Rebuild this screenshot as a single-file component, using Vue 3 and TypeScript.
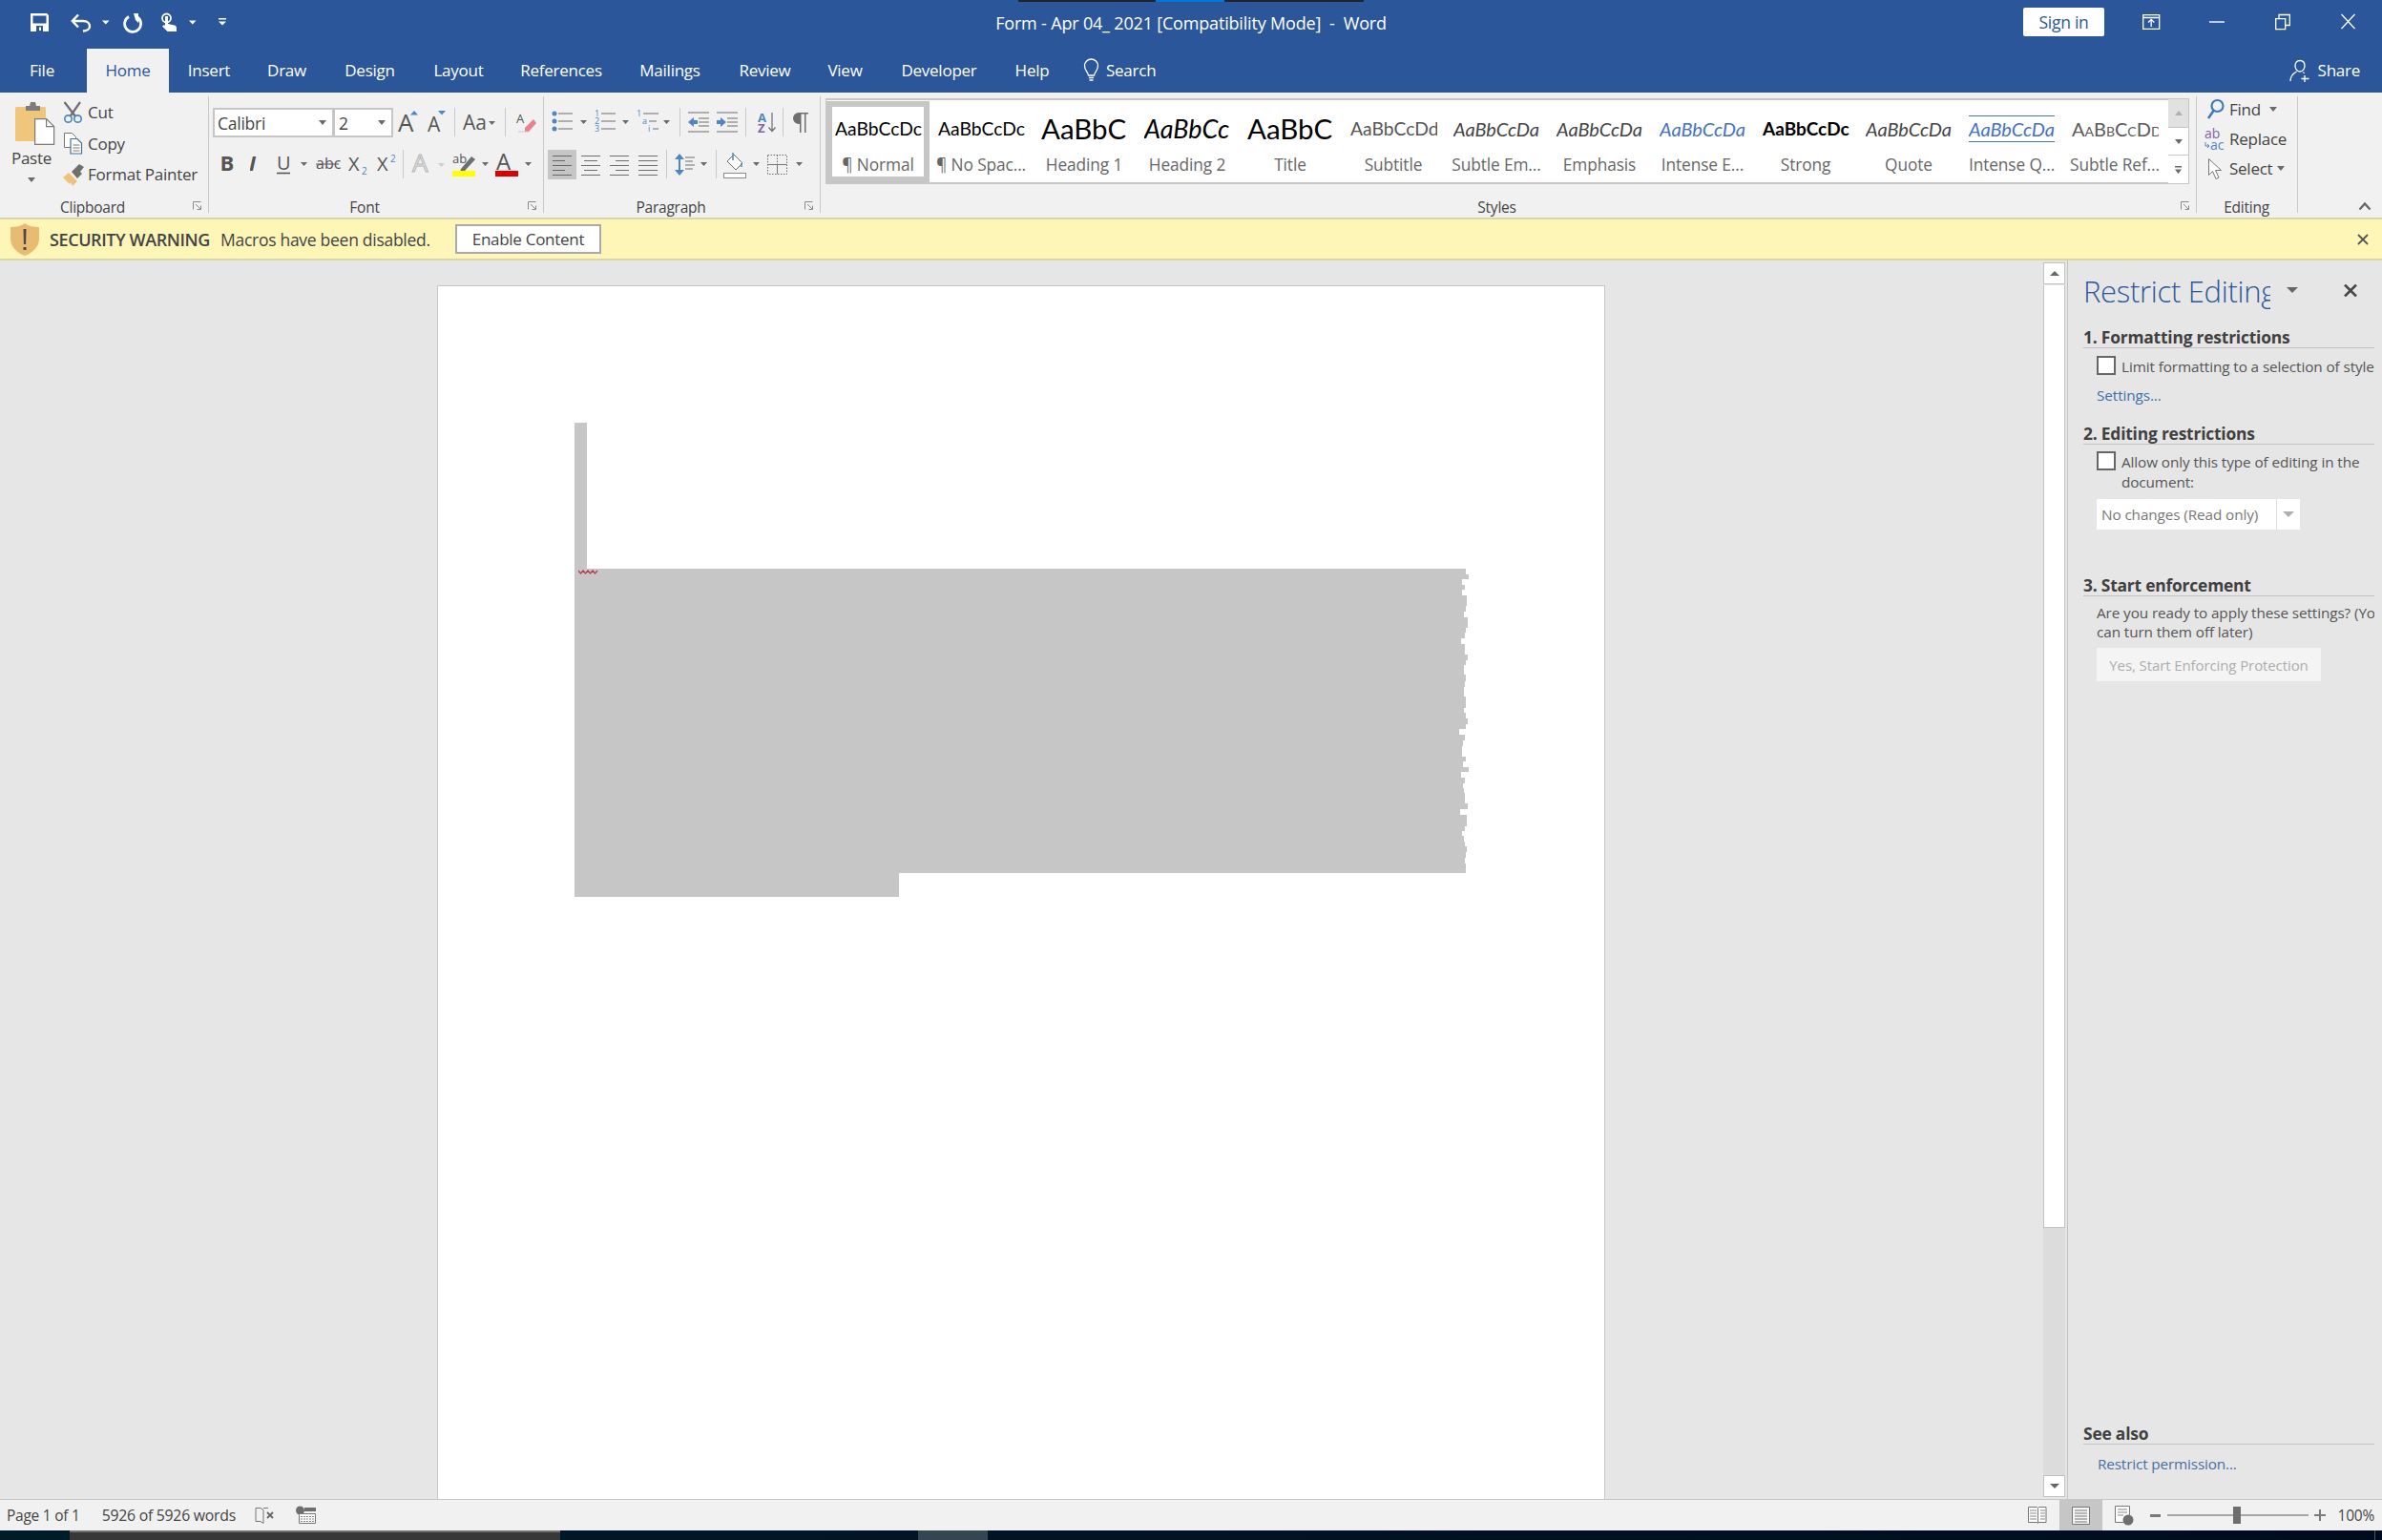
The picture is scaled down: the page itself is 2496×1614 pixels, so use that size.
<script setup lang="ts">
interface StyleItem { label: string; cls: string; text: string; selected?: boolean }
const tabs: string[] = ['File','Home','Insert','Draw','Design','Layout','References','Mailings','Review','View','Developer','Help']
const styles: StyleItem[] = [
  { label:'¶ Normal', cls:'s-normal', text:'AaBbCcDc', selected:true },
  { label:'¶ No Spac...', cls:'s-normal', text:'AaBbCcDc' },
  { label:'Heading 1', cls:'s-h1', text:'AaBbC' },
  { label:'Heading 2', cls:'s-h2', text:'AaBbCc' },
  { label:'Title', cls:'s-h1', text:'AaBbC' },
  { label:'Subtitle', cls:'s-sub', text:'AaBbCcDd' },
  { label:'Subtle Em...', cls:'s-em', text:'AaBbCcDa' },
  { label:'Emphasis', cls:'s-em', text:'AaBbCcDa' },
  { label:'Intense E...', cls:'s-ie', text:'AaBbCcDa' },
  { label:'Strong', cls:'s-strong', text:'AaBbCcDc' },
  { label:'Quote', cls:'s-em', text:'AaBbCcDa' },
  { label:'Intense Q...', cls:'s-iq', text:'AaBbCcDa' },
  { label:'Subtle Ref...', cls:'s-sr', text:'AaBbCcDd' },
]
// selection highlight: each row is one line fragment [y-end, right edge], measured in a 3x crop
const edges: [number, number][] = [[96,408],[110,417],[128,396],[145,405],[162,396],[195,411],[212,408],[230,402],[265,414],[280,408],[296,405],[315,393],[348,405],[365,414],[382,408],[412,402],[432,408],[450,405],[480,402],[515,408],[532,402],[550,408],[568,414],[582,408],[600,387],[618,405],[636,399],[670,396],[685,408],[702,399],[716,417],[735,393],[752,405],[768,399],[785,402],[818,405],[836,414],[852,390],[888,411],[904,405],[920,396],[936,402],[952,405],[970,411],[988,408],[1005,405],[1037,408]]
const rows = edges.map(([end, edge], i) => ({
  h: (end - (i ? edges[i - 1][0] : 78)) / 3,
  w: edge / 3 + 798,
}))
</script>

<template>
  <div class="app">
    <header class="titlebar">
      <div class="stripe"><i class="st-d"></i><i class="st-b"></i><i class="st-d2"></i></div>
      <div class="qat">
        <svg width="42" height="48"><path fill="#fff" fill-rule="evenodd" d="M0 14h17l2 2v17H0zM2.500 16.500v8h14v-8zM6 27v6h7v-6z"/><rect x="9" y="28.500" width="2" height="3.500" fill="#fff"/></svg>
        <svg width="55" height="48"><path fill="none" stroke="#fff" stroke-width="2.400" d="M8 15.500 1.800 22 8 28.500M2 22h11c5 0 7 3 7 5.500 0 3-3 5-7 5"/><path fill="#fff" d="M33 21.500h7.500l-3.700 4z"/></svg>
        <svg width="40" height="48"><path fill="none" stroke="#fff" stroke-width="2.800" d="M6 17.500a8.500 8.500 0 1 0 9 .5"/><path fill="#fff" d="M11 14l5 0 0 10-3-3z"/></svg>
        <svg width="60" height="48"><circle cx="5.500" cy="19" r="4.500" fill="none" stroke="#fff" stroke-width="1.800"/><path fill="#fff" d="M4 17h3v8l7 1.500c1.500.5 2 1.500 2 3V33H6.500L1 27.500 3 26l1 1z"/><path fill="#fff" d="M29 21.500h7.500l-3.700 4z"/></svg>
        <svg width="10" height="48"><path fill="#fff" d="M0 19h8v1.600H0zM0 22.500h8l-4 4z"/></svg>
      </div>
      <div class="doc-title">Form - Apr 04_ 2021 [Compatibility Mode]&nbsp; -&nbsp; Word</div>
      <div class="wc">
        <button class="signin">Sign in</button>
        <svg width="70" height="48"><path fill="none" stroke="#fff" stroke-width="1.300" d="M.7 15.700h17v14.600H.7zM.7 18.500h17M9.200 28v-7.500M6 23.500l3.200-3.200 3.200 3.200"/></svg>
        <svg width="69" height="48"><path stroke="#fff" stroke-width="1.400" d="M0 23h16"/></svg>
        <svg width="69" height="48"><path fill="none" stroke="#fff" stroke-width="1.300" d="M.7 19.700h10v11H.7zM4 19.500v-4h11.300v11H11"/></svg>
        <svg width="43" height="48"><path stroke="#fff" stroke-width="1.300" d="M.5 15l14 15M14.500 15l-14 15"/></svg>
      </div>
    </header>

    <nav class="tabs">
      <span v-for="t in tabs" :key="t" class="tab" :class="{ active: t === 'Home', file: t === 'File' }">{{ t }}</span>
      <span class="search">
        <svg width="18" height="26"><path fill="none" stroke="#fff" stroke-width="1.300" d="M5.500 18c0-3-4-5-4-10a7 7 0 0 1 14 0c0 5-4 7-4 10zM6 20.500h5M6.500 23h4"/></svg>
        Search
      </span>
      <span class="share">
        <svg width="22" height="26"><path fill="none" stroke="#fff" stroke-width="1.300" d="M11 2.500c3.500 0 5 2.500 5 5.500s-2 6-5 6-5-3-5-6 1.500-5.500 5-5.500zM1 24c0-5 3-8 6.500-10M14.500 14.500l1 1.500M16 18v7M12.500 21.500h8"/></svg>
        Share
      </span>
    </nav>

    <section class="ribbon">
      <!-- Clipboard -->
      <div class="group g-clip">
        <div class="clip-body">
          <div class="paste">
            <svg width="66" height="52"><rect x="16" y="11" width="32" height="36" rx="1.500" fill="#f0c67c"/><path fill="#7d7d7d" d="M27 10h4l1-4h5l1 4h4v5H27z"/><path fill="#fff" stroke="#7a7a7a" stroke-width="1.200" d="M36.600 23.600h12l8 8v18.800h-20z"/><path fill="none" stroke="#7a7a7a" stroke-width="1.200" d="M48.600 23.600v8h8"/></svg>
            <span class="paste-label">Paste</span>
            <i class="dd"></i>
          </div>
          <div class="clip-row">
            <svg width="26" height="24"><path stroke="#6f6f6f" stroke-width="2.200" d="M1.500 1 13 16M18 1 7.500 16"/><circle cx="5.500" cy="18.500" r="3.700" fill="none" stroke="#4f86c2" stroke-width="1.700"/><circle cx="15.500" cy="18.500" r="3.700" fill="none" stroke="#4f86c2" stroke-width="1.700"/></svg>
            Cut
          </div>
          <div class="clip-row">
            <svg width="26" height="24"><path fill="#fff" stroke="#777" d="M1.500 1.500h8l4 4v11h-12z"/><path fill="#fff" stroke="#4d6f94" stroke-width="1.200" d="M8 7.500h7l4.500 4.500v11H8z"/><path stroke="#777" d="M10.500 14h7M10.500 17h7M10.500 20h7"/></svg>
            Copy
          </div>
          <div class="clip-row">
            <svg width="26" height="24"><path fill="#efc27b" d="M0 15l6-5 9 9-5 5-2-4-1 2z"/><path fill="#6f6f6f" d="M9 9l8-8 5 3-4 5 2 2-5 5z"/></svg>
            Format Painter
          </div>
        </div>
        <div class="glabel lab-pad">Clipboard</div>
        <svg class="launch" width="10" height="10"><path fill="none" stroke="#8a8a8a" d="M.5 8.500v-8h8M3 3l5 5M8.500 4.500v4h-4"/></svg>
      </div>

      <!-- Font -->
      <div class="group g-font">
        <div class="tool-body">
          <div class="row r1 font-r1">
            <div class="combo c-font"><span>Calibri</span><i class="dd"></i></div>
            <div class="combo c-size"><span>2</span><i class="dd"></i></div>
            <svg width="36" height="31"><text x="5" y="25" class="ic-t" font-size="26">A</text><path fill="#4f86c2" d="M18 7.500l4-4.500 4 4.500z"/></svg>
            <svg width="28" height="31"><text x="0" y="25" class="ic-t" font-size="21">A</text><path fill="#4f86c2" d="M11 3h8l-4 4.500z"/></svg>
            <i class="sep"></i>
            <svg width="52" height="31"><text x="8" y="23" class="ic-t" font-size="21">Aa</text><path fill="#6a6a6a" d="M35 14h7l-3.500 4z"/></svg>
            <i class="sep"></i>
            <svg width="36" height="31"><text x="11" y="16" class="ic-t" font-size="13">A</text><path fill="#e8808f" d="M20 21l9-9 3 4-8 9-4 0z"/><path fill="none" stroke="#c8c8c8" d="M13 25h12"/></svg>
          </div>
          <div class="row r2 font-r2">
            <svg width="31" height="30"><text x="-.5" y="22" class="ic-t b" font-size="22">B</text></svg>
            <svg width="28" height="30"><text x="-1" y="22" class="ic-t i b" font-size="22">I</text></svg>
            <svg width="41" height="30"><text x="0" y="21" class="ic-t" font-size="20">U</text><path stroke="#555" stroke-width="1.600" d="M0 24.500h14"/><path fill="#6a6a6a" d="M25 13h7l-3.500 4z"/></svg>
            <svg width="34" height="30"><text x="0" y="20" class="ic-t" font-size="16" letter-spacing="-.5">abc</text><path stroke="#555" d="M0 15h24"/></svg>
            <svg width="30" height="30"><text x="0" y="22" class="ic-t" font-size="20">X</text><text x="14" y="26" class="ic-b" font-size="10">2</text></svg>
            <svg width="27" height="30"><text x="0" y="22" class="ic-t" font-size="20">X</text><text x="14" y="13" class="ic-b" font-size="10">2</text></svg>
            <i class="sep"></i>
            <svg width="51" height="30"><text x="9" y="23" class="ic-g" font-size="26">A</text><path fill="#cfcfcf" d="M36 14h7l-3.500 4z"/></svg>
            <svg width="45" height="30"><text x="0" y="14" class="ic-t" font-size="13">ab</text><path fill="#6e6e6e" d="M9 20l11-13 4 3-11 12-5 1z"/><rect x="0" y="22" width="24" height="6" fill="#ffff00"/><path fill="#6a6a6a" d="M31 13h7l-3.500 4z"/></svg>
            <svg width="45" height="30"><text x="1" y="21" class="ic-t" font-size="24">A</text><rect x="0" y="22" width="24" height="6" fill="#e00000"/><path fill="#6a6a6a" d="M31 13h7l-3.500 4z"/></svg>
          </div>
        </div>
        <div class="glabel lab-pad">Font</div>
        <svg class="launch" width="10" height="10"><path fill="none" stroke="#8a8a8a" d="M.5 8.500v-8h8M3 3l5 5M8.500 4.500v4h-4"/></svg>
      </div>

      <!-- Paragraph -->
      <div class="group g-para">
        <div class="tool-body">
          <div class="row r1 para-r1">
            <svg width="45" height="31"><g fill="#4f86c2"><circle cx="3" cy="6" r="2.500"/><circle cx="3" cy="14" r="2.500"/><circle cx="3" cy="22" r="2.500"/></g><path stroke="#6e6e6e" stroke-width="1.200" d="M7 6h15M7 14h15M7 22h15"/><path fill="#6a6a6a" d="M30 13h7l-3.500 4z"/></svg>
            <svg width="44" height="31"><g class="ic-b" font-size="9"><text x="0" y="9">1</text><text x="0" y="17">2</text><text x="0" y="25">3</text></g><path stroke="#6e6e6e" stroke-width="1.200" d="M7 6h15M7 14h15M7 22h15"/><path fill="#6a6a6a" d="M29 13h7l-3.500 4z"/></svg>
            <svg width="45" height="31"><g class="ic-b" font-size="9"><text x="0" y="9">1</text><text x="6" y="17">a</text><text x="12" y="25">i</text></g><path stroke="#6e6e6e" stroke-width="1.200" d="M7 6h16M13 14h8M17 22h6"/><path fill="#6a6a6a" d="M28 13h7l-3.500 4z"/></svg>
            <i class="sep"></i>
            <svg width="38" height="31"><path stroke="#6e6e6e" stroke-width="1.200" d="M8 5h22M19 11h11M19 15h11M19 19h11M8 25h22"/><path fill="#4f86c2" d="M8 15l6-5v3h4v4h-4v3z"/></svg>
            <svg width="30" height="31"><path stroke="#6e6e6e" stroke-width="1.200" d="M0 5h22M11 11h11M11 15h11M11 19h11M0 25h22"/><path fill="#4f86c2" d="M10 15l-6-5v3H0v4h4v3z"/></svg>
            <i class="sep"></i>
            <svg width="38" height="31"><text x="12" y="15" fill="#4f86c2" font-size="13" font-weight="700" class="ff">A</text><text x="12" y="26" fill="#8064a2" font-size="13" font-weight="700" class="ff">Z</text><path fill="none" stroke="#6e6e6e" stroke-width="1.200" d="M27 5v19M23.500 20.500l3.500 4 3.500-4"/></svg>
            <i class="sep"></i>
            <svg width="30" height="31"><path fill="#6e6e6e" d="M22 5h-6a6 6 0 0 0 0 12h1v9h1.500V6.500H22V26h1.500V6.500H26V5z"/></svg>
          </div>
          <div class="row r2 para-r2">
            <span class="al on"><svg width="30" height="31"><path stroke="#666" stroke-width="1.200" d="M5 6.500h20M5 11.500h13M5 16.500h20M5 21.500h13M5 26.500h20"/></svg></span>
            <svg width="30" height="31"><path stroke="#6e6e6e" stroke-width="1.200" d="M5 6.500h20M8 11.500h14M5 16.500h20M8 21.500h14M5 26.500h20"/></svg>
            <svg width="30" height="31"><path stroke="#6e6e6e" stroke-width="1.200" d="M5 6.500h20M11 11.500h14M5 16.500h20M11 21.500h14M5 26.500h20"/></svg>
            <svg width="34" height="31"><path stroke="#6e6e6e" stroke-width="1.200" d="M5 6.500h20M5 11.500h20M5 16.500h20M5 21.500h20M5 26.500h20"/></svg>
            <i class="sep"></i>
            <svg width="51" height="31"><path fill="none" stroke="#4f86c2" stroke-width="2" d="M13 7v17"/><path fill="#4f86c2" d="M8 10l5-6 5 6zM8 21l5 6 5-6z"/><path stroke="#6e6e6e" stroke-width="1.200" d="M19 8h10M19 12h8M19 16h10M19 20h8"/><path fill="#6a6a6a" d="M35 13h7l-3.500 4z"/></svg>
            <i class="sep"></i>
            <svg width="53" height="31"><path fill="#fff" stroke="#6e6e6e" d="M18 5l9 9-7 7-9-9z"/><path fill="none" stroke="#4f86c2" stroke-width="1.500" d="M17 3v8M26 14v4"/><rect x="7.500" y="24.500" width="23" height="5" fill="#fff" stroke="#8a8a8a"/><path fill="#6a6a6a" d="M38 13h7l-3.500 4z"/></svg>
            <svg width="45" height="31"><path fill="none" stroke="#6e6e6e" stroke-dasharray="1.500 1.500" d="M.5 5.500h20v20H.5zM10.500 5.500v20"/><path stroke="#777" d="M.5 15.500h20M10.500 15.500v10"/><path fill="#6a6a6a" d="M30 13h7l-3.500 4z"/></svg>
          </div>
        </div>
        <div class="glabel lab-pad">Paragraph</div>
        <svg class="launch" width="10" height="10"><path fill="none" stroke="#8a8a8a" d="M.5 8.500v-8h8M3 3l5 5M8.500 4.500v4h-4"/></svg>
      </div>

      <!-- Styles -->
      <div class="group g-styles">
        <div class="styles-body">
          <div class="gallery">
            <div v-for="s in styles" :key="s.label" class="sitem" :class="{ selected: s.selected }">
              <div class="preview" :class="s.cls"><span>{{ s.text }}</span></div>
              <div class="slabel">{{ s.label }}</div>
            </div>
          </div>
          <div class="gscroll">
            <span class="gs up"><i class="tri-up"></i></span>
            <span class="gs"><i class="dd"></i></span>
            <span class="gs"><svg width="9" height="10"><path fill="#6a6a6a" d="M1 1h7v1.500H1zM1 4.500h7L4.500 9z"/></svg></span>
          </div>
        </div>
        <div class="glabel lab-pad">Styles</div>
        <svg class="launch l-styles" width="10" height="10"><path fill="none" stroke="#8a8a8a" d="M.5 8.500v-8h8M3 3l5 5M8.500 4.500v4h-4"/></svg>
      </div>

      <!-- Editing -->
      <div class="group g-edit">
        <div class="edit-body">
          <div class="clip-row">
            <svg width="26" height="24"><circle cx="13.500" cy="8" r="6" fill="none" stroke="#3f7ab8" stroke-width="2.200"/><path stroke="#3f7ab8" stroke-width="2.600" d="M9.500 13 4 21"/></svg>
            Find <i class="dd edit-dd"></i>
          </div>
          <div class="clip-row">
            <svg width="26" height="24"><text x="0" y="11" fill="#8064a2" font-size="14" class="ff">ab</text><text x="6" y="23" fill="#4f86c2" font-size="14" class="ff">ac</text><path fill="none" stroke="#4f86c2" d="M1 15v4h4M3 17l2 2-2 2"/></svg>
            Replace
          </div>
          <div class="clip-row">
            <svg width="26" height="24"><path fill="#fff" stroke="#777" d="M4.500 1.500v17l4-4 3.500 8 3-1.500-3.500-7.500h6z"/></svg>
            Select <i class="dd edit-dd2"></i>
          </div>
        </div>
        <div class="glabel">Editing</div>
      </div>

      <div class="collapse"><svg width="14" height="10"><path fill="none" stroke="#666" stroke-width="2.200" d="M1.500 8.500 7 2.500l5.500 6"/></svg></div>
    </section>

    <div class="msgbar">
      <svg width="30" height="34"><path fill="#e9bb72" d="M15 0c4 3 9 4 15 4v12c0 9-7 15-15 18C7 31 0 25 0 16V4c6 0 11-1 15-4z"/><path fill="#4a4a4a" d="M13.500 6h3l-.4 16h-2.200zM13.500 25h3v3h-3z"/></svg>
      <strong class="sec">SECURITY WARNING</strong>
      <span class="mac">Macros have been disabled.</span>
      <button class="enable">Enable Content</button>
      <svg class="mclose" width="12" height="12"><path stroke="#555" stroke-width="1.800" d="M1 1l10 10M11 1 1 11"/></svg>
    </div>

    <main class="work">
      <div class="docarea">
        <div class="page">
          <div class="sel-stem"></div>
          <div class="sel-block">
            <div v-for="(r, i) in rows" :key="i" class="sel-row" :style="{ height: r.h + 'px', width: r.w + 'px' }"></div>
            <svg class="squiggle" width="22" height="5"><path fill="none" stroke="#b83a4b" stroke-width="1.200" d="M0 1l2.500 3L5 1l2.500 3L10 1l2.500 3L15 1l2.500 3L20 1"/></svg>
          </div>
          <div class="sel-tail"></div>
        </div>
      </div>
      <div class="vscroll">
        <span class="sb-btn"><i class="tri-up dark"></i></span>
        <span class="sb-thumb"></span>
        <span class="sb-track"></span>
        <span class="sb-btn"><i class="dd dark"></i></span>
      </div>
      <aside class="pane">
        <div class="pane-head">
          <span class="pane-title">Restrict Editing</span>
          <i class="pane-tri"></i>
          <svg class="pane-x" width="14" height="13"><path stroke="#484848" stroke-width="2.600" d="M1 .5 13 12.500M13 .5 1 12.500"/></svg>
        </div>
        <h3 class="sh">1. Formatting restrictions</h3>
        <label class="cbrow"><i class="cb"></i><span class="nowrap">Limit formatting to a selection of styles</span></label>
        <a class="plink settings">Settings...</a>
        <h3 class="sh sh2">2. Editing restrictions</h3>
        <label class="cbrow two"><i class="cb"></i><span>Allow only this type of editing in the<br>document:</span></label>
        <div class="pcombo"><span>No changes (Read only)</span><b><i class="grey-tri"></i></b></div>
        <h3 class="sh sh3">3. Start enforcement</h3>
        <p class="ready">Are you ready to apply these settings? (You<br>can turn them off later)</p>
        <button class="yes">Yes, Start Enforcing Protection</button>
        <h3 class="sh see">See also</h3>
        <a class="plink perm">Restrict permission...</a>
      </aside>
    </main>

    <footer class="status">
      <span class="st-page">Page 1 of 1</span>
      <span class="st-words">5926 of 5926 words</span>
      <svg class="st-i1" width="22" height="20"><path fill="none" stroke="#777" d="M1 2.500h5l3 2v14l-3-2H1zM14 2.500h-5"/><path stroke="#666" stroke-width="1.800" d="M13 7l6 6M19 7l-6 6"/></svg>
      <svg class="st-i2" width="22" height="20"><circle cx="4.500" cy="5" r="4.500" fill="#6e6e6e"/><path fill="#6e6e6e" d="M9 2h12v4H9z"/><path fill="#fff" stroke="#777" d="M3.500 8.500h17v10h-17z"/><path stroke="#888" stroke-dasharray="2 1" d="M5 11.500h14M5 14h14M5 16.500h14"/></svg>
      <span class="st-right">
        <svg width="32" height="32"><path fill="#fff" stroke="#777" d="M.5 7.500h9l1 1 1-1h7.500v16h-8l-.5 1-.5-1h-9.500zM10.500 8.500v15"/><path stroke="#888" d="M2 11h7M2 14h7M2 17h7M2 20h7M13 11h5M13 14h5M13 17h5M13 20h5"/></svg>
        <span class="vw on"><svg width="19" height="19"><path fill="#f5f5f5" stroke="#777" d="M.5.500h18v18H.500z"/><path stroke="#777" d="M3 4h13M3 7h13M3 10h13M3 13h13M3 16h13"/></svg></span>
        <svg class="vw-web" width="38" height="32"><path fill="#fff" stroke="#777" d="M.5 6.500h15v17H.5z"/><path stroke="#888" d="M3 10h10M3 13h10M3 16h6"/><circle cx="14" cy="21" r="5.500" fill="#6e6e6e"/></svg>
        <svg class="zm" width="11" height="3"><rect width="11" height="3" fill="#7a7a7a"/></svg>
        <span class="slider"><i class="thumb"></i></span>
        <svg class="zp" width="12" height="12"><path stroke="#7a7a7a" stroke-width="2" d="M0 6h12M6 0v12"/></svg>
        <span class="pct">100%</span>
      </span>
    </footer>
    <div class="taskbar">
      <i class="tb-app"></i>
      <i class="tb-hi"></i>
      <i class="tb-line"></i>
    </div>
  </div>
</template>

<style>
html, body { margin: 0; padding: 0; background: #e6e6e6; }
</style>

<style scoped>
.app {
  width: 2496px; height: 1614px; overflow: hidden; display: flex; flex-direction: column;
  font-family: "Open Sans", "Noto Sans", sans-serif; font-size: 17px; color: #444;
  letter-spacing: -.25px;
}
i { display: block; font-style: normal; }
svg { display: block; flex: none; }
.ff, .ic-t, .ic-b, .ic-g { font-family: "Open Sans", sans-serif; letter-spacing: 0; }
.ic-t { fill: #555; }
.ic-t.b { font-weight: 700; }
.ic-t.i { font-style: italic; }
.ic-b { fill: #4f86c2; }
.ic-g { fill: #eee; stroke: #b5b5b5; stroke-width: 1; }

/* title */
.titlebar { position: relative; height: 51px; flex: none; background: #2b579a; display: grid; grid-template-columns: 1fr auto 1fr; color: #fff; }
.stripe { position: absolute; left: 1067px; top: 0; display: flex; height: 2px; }
.st-d { width: 144px; background: #1f2430; }
.st-b { width: 72px; background: #0078d7; }
.st-d2 { width: 146px; background: #1f2430; }
.qat { display: flex; padding-left: 32px; }
.doc-title { line-height: 48px; font-size: 18px; letter-spacing: -.18px; white-space: nowrap; }
.wc { display: flex; justify-content: flex-end; }
.signin { width: 85px; height: 30px; margin: 8px 40px 0 0; border: 0; border-radius: 2px; background: #fff; color: #2b579a; font: inherit; font-size: 17.500px; letter-spacing: inherit; padding: 0; }

/* tabs */
.tabs { height: 46px; flex: none; background: #2b579a; color: #fff; display: grid; grid-template-columns: 91px 86px 84px 79px 95px 91px 124px 104px 95px 73px 124px 71px auto 1fr; align-items: stretch; line-height: 46px; }
.tab { text-align: center; }
.tab.file { padding-right: 3px; }
.tab.active { background: #f1f1f1; color: #2b579a; }
.search { display: flex; align-items: center; gap: 6px; padding-left: 18px; }
.share { display: flex; align-items: center; gap: 8px; justify-self: end; padding-right: 23px; }

/* ribbon */
.ribbon { height: 131px; flex: none; background: #f1f1f1; display: flex; padding-top: 4px; box-sizing: border-box; font-size: 17px; }
.group { position: relative; display: flex; flex-direction: column; height: 127px; flex: none; }
.group::after { content: ""; position: absolute; right: 0; top: 0; bottom: 5px; width: 1px; background: #c9c9c9; }
.g-clip { width: 219px; }
.g-font { width: 351px; }
.g-para { width: 290px; }
.g-styles { width: 1442px; }
.g-edit { width: 106px; }
.glabel { height: 22px; line-height: 22px; text-align: center; font-size: 15.500px; flex: none; margin-top: auto; }
.lab-pad { padding-right: 25px; }
.g-para .lab-pad { padding-right: 24px; }
.g-edit .glabel { padding-right: 2px; }
.launch { position: absolute; right: 7px; bottom: 7px; }
.l-styles { right: 7px; }
.dd { width: 0; height: 0; border: 4px solid transparent; border-top: 5px solid #6a6a6a; border-bottom: 0; }
.tri-up { width: 0; height: 0; border: 4px solid transparent; border-bottom: 5px solid #b0b0b0; border-top: 0; }
.dd.dark { border-top-color: #666; border-left-width: 5px; border-right-width: 5px; }
.tri-up.dark { border-bottom-color: #666; border-left-width: 5px; border-right-width: 5px; }

.clip-body { display: grid; grid-template-columns: 66px 1fr; grid-template-rows: 33px 32px 33px; }
.paste { grid-row: 1 / 4; display: flex; flex-direction: column; align-items: center; position: relative; }
.paste-label { line-height: 24px; margin-top: 1px; }
.paste .dd { margin-top: 8px; }
.clip-row { display: flex; align-items: center; white-space: nowrap; }

.tool-body { padding-top: 12px; display: flex; flex-direction: column; }
.row { display: flex; align-items: flex-start; }
.r1 { height: 31px; }
.r2 { height: 31px; margin-top: 13px; }
.font-r1 { padding-left: 4px; }
.font-r2 { padding-left: 12px; }
.para-r1 { padding-left: 8px; }
.para-r2 { padding-left: 4px; }
.sep { width: 1px; height: 30px; background: #c9c9c9; flex: none; }
.combo { height: 31px; box-sizing: border-box; border: 2px solid #c6c6c6; background: #fff; display: flex; align-items: center; justify-content: space-between; padding: 0 6px 0 3px; font-size: 17.500px; flex: none; }
.c-font { width: 127px; }
.c-size { width: 63px; margin-left: -1px; padding-left: 4px; }
.al.on { background: #c6c6c6; display: block; }

/* styles */
.styles-body { display: flex; padding: 2px 0 0 5px; height: 92px; box-sizing: border-box; }
.gallery { width: 1407px; height: 90px; box-sizing: border-box; background: #fff; border: solid #c6c6c6; border-width: 2px 0 2px 1px; display: flex; padding-top: 1px; flex: none; }
.sitem { width: 108px; height: 85px; box-sizing: border-box; border: 6px solid transparent; flex: none; overflow: hidden; }
.sitem.selected { border-color: #c6c6c6; }
.preview { height: 48px; box-sizing: border-box; padding-bottom: 3px; margin: 0 2px 0 3px; overflow: hidden; display: flex; align-items: center; white-space: nowrap; font-family: Lato, "Open Sans", sans-serif; font-size: 19.300px; color: #000; letter-spacing: 0; }
.slabel { text-align: center; line-height: 25px; font-size: 17.300px; letter-spacing: -.1px; white-space: nowrap; color: #666; overflow: hidden; }
.s-h1 { font-size: 29.500px; }
.s-h2 { font-size: 27px; font-style: italic; }
.s-sub { color: #555; }
.s-em { color: #444; font-style: italic; font-size: 20px; }
.s-ie { color: #4472c4; font-style: italic; font-size: 20px; }
.s-strong { font-weight: 700; font-size: 19px; }
.s-iq { color: #4472c4; font-style: italic; font-size: 20px; }
.s-iq span { display: block; line-height: 26px; border: solid #4472c4; border-width: 1.500px 0; }
.s-sr { color: #5a5a5a; font-variant: small-caps; font-size: 20px; }
.gscroll { width: 22px; display: flex; flex-direction: column; height: 90px; }
.gs { flex: 1; display: flex; align-items: center; justify-content: center; background: #fff; border: 1px solid #c6c6c6; border-left: 0; box-sizing: border-box; }
.gs + .gs { border-top: 0; }
.gs.up { background: #e1e1e1; }

.edit-body { display: grid; grid-template-rows: 31px 31px 31px; padding-left: 8px; margin-top: -2px; }
.edit-dd { margin-left: 9px; }
.edit-dd2 { margin-left: 5px; }
.collapse { flex: 1; display: flex; justify-content: flex-end; align-items: flex-end; padding: 0 11px 7px 0; height: 127px; box-sizing: border-box; }

/* message bar */
.msgbar { height: 45px; flex: none; box-sizing: border-box; background: #fdf6b7; border-top: 2px solid #d9d6ad; border-bottom: 2px solid #d9d6ad; display: flex; align-items: center; padding-left: 11px; position: relative; font-size: 17.500px; letter-spacing: -.28px; }
.sec { margin-left: 11px; width: 168px; flex: none; white-space: nowrap; font-size: 18px; font-weight: 600; color: #444; letter-spacing: -.4px; }
.mac { margin-left: 11px; width: 220px; flex: none; white-space: nowrap; }
.enable { width: 153px; height: 31px; margin-left: 26px; background: #fff; border: 2px solid #aaa; font: inherit; font-size: 17px; letter-spacing: inherit; color: #444; padding: 0; }
.mclose { margin-left: auto; margin-right: 14px; }

/* workspace */
.work { flex: 1; min-height: 0; display: flex; background: #e6e6e6; }
.docarea { width: 2141px; padding: 26px 0 0 458px; box-sizing: border-box; overflow: hidden; flex: none; display: flex; }
.page { width: 1224px; box-sizing: border-box; background: #fff; border: 1px solid #c6c6c6; border-bottom: 0; padding: 143px 0 0 143px; }
.sel-stem { width: 13px; height: 153px; background: #c6c6c6; }
.sel-block { position: relative; }
.sel-row { background: #c6c6c6; }
.squiggle { position: absolute; left: 4px; top: 1px; }
.sel-tail { width: 340px; height: 25px; background: #c6c6c6; }

.vscroll { width: 25px; flex: none; padding: 2px 2px 2px 0; box-sizing: border-box; display: flex; flex-direction: column; }
.sb-btn { height: 23px; flex: none; background: #fff; border: 1px solid #c2c2c2; box-sizing: border-box; display: flex; align-items: center; justify-content: center; }
.sb-thumb { height: 988px; flex: none; background: #fff; border: 1px solid #c2c2c2; border-top: 0; box-sizing: border-box; margin-top: 1px; }
.sb-track { flex: 1; background: #dcdcdc; }

.pane { width: 330px; flex: none; box-sizing: border-box; border-left: 1px solid #c2c2c2; padding: 0 8px 26px 16px; display: flex; flex-direction: column; overflow: hidden; font-size: 15.300px; letter-spacing: -.1px; color: #555; }
.pane-head { height: 67px; flex: none; display: flex; align-items: center; }
.pane-title { width: 196px; overflow: hidden; white-space: nowrap; font-size: 31px; font-weight: 300; color: #2b579a; letter-spacing: -.3px; line-height: 64px; align-self: flex-start; flex: none; }
.pane-tri { width: 0; height: 0; border: 6px solid transparent; border-top: 6px solid #666; border-bottom: 0; margin-left: 17px; margin-top: -5px; }
.pane-x { margin-left: 48px; margin-top: -5px; }
.sh { margin: 0; height: 25px; line-height: 26px; box-sizing: border-box; border-bottom: 1px solid #c2c2c2; font-size: 17.400px; font-weight: 700; color: #404040; letter-spacing: -.2px; flex: none; }
.sh2 { margin-top: 16px; }
.sh3 { margin-top: 45px; }
.see { margin-top: auto; }
.cbrow { display: flex; gap: 6px; margin: 8px 0 0 14px; height: 23px; line-height: 21px; flex: none; }
.cbrow.two { margin-top: 7px; height: 44px; }
.cbrow span { padding-top: 1px; }
.nowrap { white-space: nowrap; overflow: hidden; width: 265px; flex: none; }
.cb { width: 20px; height: 20px; box-sizing: border-box; border: 2px solid #666; background: #fff; flex: none; }
.plink { color: #3f6fa5; line-height: 22px; flex: none; margin-left: 14px; }
.settings { margin-top: 7px; }
.perm { margin-top: 9px; margin-left: 15px; color: #46709f; letter-spacing: -.15px; }
.pcombo { margin: 6px 0 0 14px; width: 213px; height: 32px; background: #fff; display: flex; align-items: center; justify-content: space-between; color: #777; flex: none; padding-left: 5px; box-sizing: border-box; }
.pcombo b { width: 25px; height: 32px; border-left: 1px solid #ddd; display: flex; align-items: center; justify-content: center; box-sizing: border-box; }
.grey-tri { width: 0; height: 0; border: 6px solid transparent; border-top: 6px solid #b0b0b0; border-bottom: 0; }
.ready { margin: 7px 0 0 14px; line-height: 20px; white-space: nowrap; flex: none; width: 291px; overflow: hidden; }
.yes { margin: 7px 0 0 14px; width: 235px; height: 35px; background: #f4f4f4; border: 0; color: #adadad; font: inherit; font-size: 15px; letter-spacing: inherit; padding: 0; flex: none; }

/* status */
.status { height: 33px; flex: none; box-sizing: border-box; background: #f1f1f1; border-top: 1px solid #c6c6c6; display: flex; align-items: center; padding-left: 7px; font-size: 15.500px; }
.st-words { margin-left: 23px; font-size: 15.800px; }
.st-i1 { margin-left: 20px; }
.st-i2 { margin-left: 21px; }
.st-right { margin-left: auto; display: flex; align-items: center; height: 100%; padding-right: 8px; }
.st-right > svg:first-child { margin-right: 1px; }
.vw { width: 45px; height: 32px; display: flex; align-items: center; justify-content: center; }
.vw.on { background: #c6c6c6; }
.vw-web { margin-left: 13px; }
.zm { margin-left: -1px; }
.slider { position: relative; width: 148px; height: 2px; margin: 0 6px 0 7px; background: #a6a6a6; }
.thumb { position: absolute; left: 69px; top: -8px; width: 8px; height: 18px; background: #6e6e6e; }
.pct { margin-left: 13px; }

/* taskbar */
.taskbar { height: 10px; flex: none; background: linear-gradient(90deg, #001c28, #000c1e); display: flex; position: relative; }
.tb-app { width: 514px; margin-left: 73px; background: #383838; border-top: 2px solid #707070; box-sizing: border-box; }
.tb-hi { width: 73px; margin-left: 375px; background: #324850; }
.tb-line { width: 1px; margin-left: 1453px; background: #555; }
</style>
